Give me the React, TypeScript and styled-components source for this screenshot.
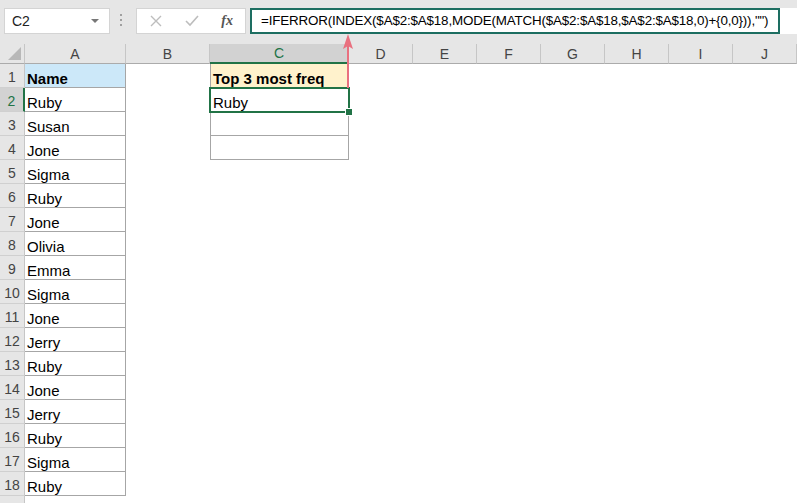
import React from 'react'
import styled, { createGlobalStyle } from 'styled-components'

const GlobalStyle = createGlobalStyle`
  body {
    margin: 0;
    background: #fff;
    font-family: 'Liberation Sans', Arial, sans-serif;
  }
`

const Sheet = styled.div`
  position: relative;
  width: 797px;
  height: 503px;
  overflow: hidden;
  background: #fff;
`

const FormulaBar = styled.div`
  display: flex;
  align-items: flex-start;
  height: 44px;
  padding: 8px 0 0 4px;
  box-sizing: border-box;
  background: #e6e6e6;
`

const NameBox = styled.div`
  display: flex;
  align-items: center;
  justify-content: space-between;
  width: 106px;
  height: 26px;
  box-sizing: border-box;
  padding: 0 10px 0 7px;
  background: #fff;
  border: 1px solid #d4d4d4;
  font-size: 14px;
  color: #222;
`

const Caret = styled.span`
  width: 0;
  height: 0;
  border-left: 4px solid transparent;
  border-right: 4px solid transparent;
  border-top: 4px solid #777;
`

const Grip = styled.div`
  display: flex;
  flex-direction: column;
  gap: 3px;
  width: 26px;
  padding: 6px 0 0 10px;
  box-sizing: border-box;
`

const GripDot = styled.span`
  width: 2px;
  height: 2px;
  background: #a0a0a0;
`

const FxBox = styled.div`
  display: flex;
  align-items: center;
  justify-content: space-between;
  width: 110px;
  height: 26px;
  box-sizing: border-box;
  margin-right: 4px;
  padding: 0 12px 0 13px;
  background: #fff;
  border: 1px solid #d4d4d4;
`

const FxLabel = styled.span`
  font-family: 'Liberation Serif', 'Times New Roman', serif;
  font-style: italic;
  font-weight: bold;
  font-size: 14px;
  color: #555;
`

const FormulaField = styled.div`
  flex: 1;
  height: 26px;
  background: #fff;
`

const FormulaEdit = styled.div`
  width: 530px;
  height: 26px;
  box-sizing: border-box;
  padding-left: 9px;
  border: 2px solid #1d6e61;
  font-size: 13.4px;
  letter-spacing: -0.17px;
  line-height: 22px;
  color: #000;
  white-space: nowrap;
`

const Grid = styled.div`
  display: grid;
  grid-template-columns: 25px 101px 84px 139px 64px 64px 64px 64px 64px 64px 1fr;
  grid-template-rows: 20px;
  grid-auto-rows: 24px;
`

const Corner = styled.div`
  display: flex;
  align-items: flex-end;
  justify-content: flex-end;
  padding: 0 3px 3px 0;
  background: #e6e6e6;
  border-right: 1px solid #c6c6c6;
  border-bottom: 1px solid #ababab;
`

const CornerTriangle = styled.span`
  width: 0;
  height: 0;
  border-left: 13px solid transparent;
  border-bottom: 13px solid #b8b8b8;
`

const ColHead = styled.div<{ $active?: boolean }>`
  display: flex;
  align-items: center;
  justify-content: center;
  box-sizing: border-box;
  background: ${(p) => (p.$active ? '#d2d2d2' : '#e6e6e6')};
  border-right: 1px solid #c6c6c6;
  border-bottom: ${(p) => (p.$active ? '2px solid #217346' : '1px solid #ababab')};
  font-size: 14px;
  color: ${(p) => (p.$active ? '#217346' : '#444')};
`

const RowHead = styled.div<{ $active?: boolean }>`
  display: flex;
  align-items: flex-end;
  justify-content: center;
  box-sizing: border-box;
  padding-bottom: 1px;
  background: ${(p) => (p.$active ? '#d2d2d2' : '#e6e6e6')};
  border-right: ${(p) => (p.$active ? '2px solid #217346' : '1px solid #c6c6c6')};
  border-bottom: 1px solid #d0d0d0;
  font-size: 14px;
  line-height: 18px;
  color: ${(p) => (p.$active ? '#217346' : '#444')};
`

const Cell = styled.div<{ $boxed?: boolean; $leftEdge?: boolean; $fill?: string; $bold?: boolean }>`
  position: relative;
  display: flex;
  align-items: flex-end;
  box-sizing: border-box;
  padding: 0 3px 0 2px;
  background: ${(p) => p.$fill || '#fff'};
  border-right: 1px solid ${(p) => (p.$boxed ? '#a6a6a6' : 'transparent')};
  border-bottom: 1px solid ${(p) => (p.$boxed ? '#a6a6a6' : 'transparent')};
  border-left: ${(p) => (p.$leftEdge ? '1px solid #a6a6a6' : 'none')};
  font-size: 15px;
  font-weight: ${(p) => (p.$bold ? 'bold' : 'normal')};
  line-height: 16px;
  color: #000;
  white-space: nowrap;
`

const Selection = styled.div`
  position: absolute;
  z-index: 2;
  top: -1px;
  left: -2px;
  right: -2px;
  bottom: -2px;
  border: 2px solid #217346;
  pointer-events: none;
`

const FillHandle = styled.span`
  position: absolute;
  right: -5px;
  bottom: -5px;
  width: 6px;
  height: 6px;
  background: #217346;
  border: 1px solid #fff;
`

const Pointer = styled.svg`
  position: absolute;
  z-index: 3;
  left: 343px;
  top: 34px;
`

const columns = ['A', 'B', 'C', 'D', 'E', 'F', 'G', 'H', 'I', 'J']

const names = [
  'Name', 'Ruby', 'Susan', 'Jone', 'Sigma', 'Ruby', 'Jone', 'Olivia', 'Emma',
  'Sigma', 'Jone', 'Jerry', 'Ruby', 'Jone', 'Jerry', 'Ruby', 'Sigma', 'Ruby',
]

const topFreq = ['Top 3 most freq', 'Ruby', '', '']

const formula = '=IFERROR(INDEX($A$2:$A$18,MODE(MATCH($A$2:$A$18,$A$2:$A$18,0)+{0,0})),"")'

const CrossIcon = () => (
  <svg width="12" height="12" viewBox="0 0 12 12">
    <path d="M1 1 L11 11 M11 1 L1 11" stroke="#bdbdbd" strokeWidth="1.4" fill="none" />
  </svg>
)

const CheckIcon = () => (
  <svg width="14" height="12" viewBox="0 0 14 12">
    <path d="M1 6 L5 10 L13 1" stroke="#bdbdbd" strokeWidth="1.6" fill="none" />
  </svg>
)

const App: React.FC = () => {
  const rows = Array.from({ length: 19 }, (_, i) => i + 1)
  return (
    <Sheet>
      <GlobalStyle />
      <FormulaBar>
        <NameBox>
          C2
          <Caret />
        </NameBox>
        <Grip>
          <GripDot />
          <GripDot />
          <GripDot />
        </Grip>
        <FxBox>
          <CrossIcon />
          <CheckIcon />
          <FxLabel>fx</FxLabel>
        </FxBox>
        <FormulaField>
          <FormulaEdit>{formula}</FormulaEdit>
        </FormulaField>
      </FormulaBar>
      <Grid>
        <Corner>
          <CornerTriangle />
        </Corner>
        {columns.map((c) => (
          <ColHead key={c} $active={c === 'C'}>
            {c}
          </ColHead>
        ))}
        {rows.map((r) => (
          <React.Fragment key={r}>
            <RowHead $active={r === 2}>{r <= 18 ? r : ''}</RowHead>
            <Cell
              $boxed={r <= 18}
              $fill={r === 1 ? '#cce8f9' : undefined}
              $bold={r === 1}
            >
              {names[r - 1]}
            </Cell>
            <Cell />
            <Cell
              $boxed={r <= 4}
              $leftEdge={r <= 4}
              $fill={r === 1 ? '#fff2cc' : undefined}
              $bold={r === 1}
            >
              {r <= 4 ? topFreq[r - 1] : ''}
              {r === 2 && (
                <Selection>
                  <FillHandle />
                </Selection>
              )}
            </Cell>
            {columns.slice(3).map((c) => (
              <Cell key={c} />
            ))}
          </React.Fragment>
        ))}
      </Grid>
      <Pointer width="10" height="54" viewBox="0 0 10 54">
        <line x1="5" y1="10" x2="5" y2="54" stroke="#e9707f" strokeWidth="2" />
        <polygon points="5,0 10,15 5,12 0,15" fill="#e9707f" />
      </Pointer>
    </Sheet>
  )
}

export default App
